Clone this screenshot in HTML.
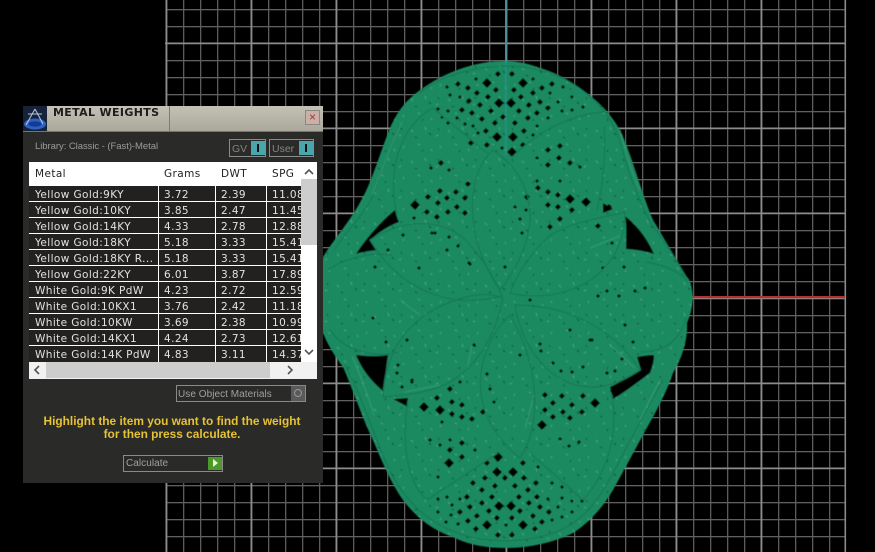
<!DOCTYPE html>
<html><head><meta charset="utf-8">
<style>
html,body{margin:0;padding:0;background:#000;width:875px;height:552px;overflow:hidden}
#stage{position:relative;width:875px;height:552px;overflow:hidden;background:#000}
svg.bg{position:absolute;left:0;top:0}
.p{position:absolute;left:23px;top:106px;width:300px;height:377px;background:#2a2a29}
.a{position:absolute;white-space:nowrap}
.title{left:0;top:0;width:300px;height:25px;background:linear-gradient(#c4c2b6,#aaa89b);border-bottom:1px solid #77766d}
.tt{font:bold 11px "DejaVu Sans",sans-serif;color:#1d1d1d;left:30px;top:0;letter-spacing:.35px}
.lib{font:9.5px "Liberation Sans",sans-serif;color:#9c9c9c;left:12px;top:35px;letter-spacing:-.05px}
.tg{border:1px solid #8b8b8b;box-sizing:border-box;height:18px;color:#858585;font:10.5px "Liberation Sans",sans-serif;line-height:18px;padding-left:2px}
.tb{position:absolute;top:1px;right:0;width:14px;height:14px;background:#4aa6ad}
.tb:after{content:"";position:absolute;left:6px;top:3px;width:2px;height:8px;background:#111}
.tbl{left:6px;top:56px;width:288px;height:217px;background:#f1f1f1;overflow:hidden}
.hd{left:0;top:0;width:272px;height:24px;background:#fff}
.c{font:10.5px "DejaVu Sans",sans-serif;letter-spacing:.4px}
.hc{color:#222;line-height:24px;top:0}
.row{left:0;width:272px;height:15px;background:#222120;overflow:hidden;border-bottom:1px solid #fff;color:#e2e2e2;font:10.5px/18px "DejaVu Sans",sans-serif;letter-spacing:.4px}
.row span{position:absolute;top:0;white-space:nowrap}
.n{left:6px}.g{left:135px}.d{left:192px}.s{left:243px}
.v{top:0;width:1px;height:200px;background:#fff}
.hint{left:0;width:298px;text-align:center;color:#e6c234;font:bold 11.9px/13px "Liberation Sans",sans-serif;top:309px;white-space:nowrap}
.btn{border:1px solid #8a8a8a;box-sizing:border-box;color:#a0a0a0;font:10px "Liberation Sans",sans-serif}
</style></head><body><div id="stage">
<svg class="bg" width="875" height="552" viewBox="0 0 875 552" xmlns="http://www.w3.org/2000/svg">
<defs>
<pattern id="mn" x="166" y="9" width="17" height="17" patternUnits="userSpaceOnUse">
<rect x="0" y="0" width="1.3" height="17" fill="#5c5c5c"/><rect x="0" y="0" width="17" height="1.3" fill="#606060"/></pattern>
<pattern id="mj" x="165.5" y="42.5" width="85" height="85" patternUnits="userSpaceOnUse">
<rect x="0" y="0" width="1.8" height="85" fill="#8c8c8c"/><rect x="0" y="0" width="85" height="1.6" fill="#8c8c8c"/></pattern>
<pattern id="sp" width="37" height="31" patternUnits="userSpaceOnUse">
<path d="M4 6l2 2M18 3l1 3M29 12l2-1M11 20l2 1M24 25l1 2M33 24l1-2" stroke="#4fae8b" stroke-width=".8" fill="none"/>
<path d="M8 13l2 1M22 9l2 2M15 28l1-2M31 4l1 2" stroke="#0a5538" stroke-width="1" fill="none"/></pattern>
<filter id="soft" x="-5%" y="-5%" width="110%" height="110%"><feGaussianBlur stdDeviation=".45"/></filter>
<filter id="g" x="0" y="0" width="100%" height="100%"><feGaussianBlur stdDeviation=".35"/></filter>
</defs>
<g filter="url(#g)">
<rect x="166" y="0" width="680" height="552" fill="url(#mn)"/>
<rect x="165" y="0" width="681" height="552" fill="url(#mj)"/>
<rect x="844.5" y="0" width="1.6" height="552" fill="#8a8a8a"/>
<rect x="505" y="0" width="1.6" height="62" fill="#2b93a8"/>
<rect x="690" y="296" width="155" height="2.2" fill="#b13232"/>
</g>
<g filter="url(#soft)">
<path d="M505 61C475 61 445 72 420 90C405 101 397 112 390 128C381 150 373 178 363 197C350 222 333 240 323 257C319 275 320 310 323 333C330 350 338 360 343 367C353 390 363 420 373 440C382 462 392 485 403 500C418 520 435 531 453 537C470 546 490 548 507 548C530 548 555 542 573 533C590 522 603 507 613 490C627 465 640 440 653 417C662 400 668 388 673 373C682 358 688 340 687 323C692 312 694 298 692 290C691 282 689 279 687 277C678 262 665 240 653 220C642 195 632 155 620 130C610 113 600 103 587 93C570 80 555 72 537 67C527 63 515 61 505 61Z" fill="#1b8a60"/>
<path d="M505 61C475 61 445 72 420 90C405 101 397 112 390 128C381 150 373 178 363 197C350 222 333 240 323 257C319 275 320 310 323 333C330 350 338 360 343 367C353 390 363 420 373 440C382 462 392 485 403 500C418 520 435 531 453 537C470 546 490 548 507 548C530 548 555 542 573 533C590 522 603 507 613 490C627 465 640 440 653 417C662 400 668 388 673 373C682 358 688 340 687 323C692 312 694 298 692 290C691 282 689 279 687 277C678 262 665 240 653 220C642 195 632 155 620 130C610 113 600 103 587 93C570 80 555 72 537 67C527 63 515 61 505 61Z" fill="url(#sp)"/>
<rect x="505" y="60" width="1.6" height="95" fill="#2a9db0" opacity=".45"/>
<g fill="#030504">
<path d="M395 210C380 222 365 240 356 254C362 252 370 251 377 250L370 240C378 233 388 226 399 222C397 218 396 214 395 210Z"/>
<path d="M603 203L613 209L603 213Z"/>
<path d="M625 216C638 226 648 240 654 254C648 252 640 250 626 249C626 238 627 227 625 216Z"/>
<path d="M356 355C365 356 376 357 388 355L383 391C372 382 362 370 356 355Z"/>
<path d="M393 399L408 398L408 407Z"/>
<path d="M637 357C642 356 648 355 654 355C654 362 652 368 650 373C638 382 625 392 613 399L610 387C620 382 632 376 641 370Z"/>
</g>
<g fill="none" stroke="#030504">
<path transform="translate(-2.5 -2.5)" stroke-width="7" d="M487 83l5 5M523 83l5 5M499 103l5 5M511 103l5 5M497 137l5 5M513 137l5 5M512 152l5 5M498 457l5 5M497 472l5 5M513 472l5 5M499 506l5 5M511 506l5 5M487 525l5 5M523 525l5 5M415 205l5 5M570 199l5 5M586 202l5 5M615 391l5 5M595 403l5 5M424 407l5 5M440 410l5 5M449 463l5 5M542 425l5 5"/>
<path transform="translate(-1.6 -1.6)" stroke-width="4.4" d="M498 74l3 3M512 74l3 3M458 84l3 3M552 84l3 3M468 88l3 3M496 90l3 3M514 90l3 3M542 88l3 3M477 93l3 3M533 93l3 3M488 97l3 3M521 97l3 3M469 101l3 3M540 102l3 3M480 105l3 3M529 105l3 3M462 110l3 3M548 108l3 3M472 113l3 3M491 111l3 3M519 111l3 3M537 113l3 3M482 119l3 3M503 117l3 3M528 118l3 3M495 123l3 3M515 123l3 3M486 131l3 3M524 131l3 3M471 143l3 3M487 145l3 3M523 145l3 3M487 463l3 3M523 463l3 3M473 483l3 3M485 478l3 3M505 478l3 3M524 478l3 3M536 483l3 3M495 486l3 3M515 486l3 3M482 490l3 3M528 490l3 3M467 497l3 3M492 497l3 3M519 497l3 3M537 497l3 3M482 503l3 3M529 503l3 3M470 507l3 3M540 507l3 3M460 512l3 3M489 511l3 3M520 511l3 3M549 512l3 3M477 516l3 3M533 516l3 3M468 521l3 3M497 518l3 3M512 518l3 3M542 522l3 3M476 529l3 3M535 529l3 3M498 535l3 3M512 535l3 3M468 184l3 3M456 192l3 3M440 191l3 3M428 197l3 3M447 198l3 3M465 198l3 3M438 203l3 3M457 207l3 3M427 212l3 3M448 212l3 3M465 213l3 3M437 217l3 3M538 188l3 3M527 197l3 3M548 192l3 3M558 195l3 3M548 205l3 3M558 207l3 3M572 210l3 3M609 207l3 3M560 219l3 3M550 227l3 3M598 226l3 3M452 402l3 3M437 398l3 3M450 389l3 3M462 405l3 3M452 414l3 3M462 417l3 3M472 419l3 3M483 412l3 3M583 396l3 3M572 405l3 3M562 396l3 3M553 403l3 3M545 395l3 3M545 410l3 3M553 417l3 3M563 412l3 3M582 412l3 3M570 418l3 3M462 443l3 3M450 450l3 3M462 457l3 3M560 146l3 3M548 150l3 3M559 158l3 3M548 165l3 3M570 163l3 3M441 163l3 3"/>
<path transform="translate(-1 -1)" stroke-width="2.8" d="M476 79l2 2M533 79l2 2M447 87l2 2M563 87l2 2M550 93l2 2M460 97l2 2M572 97l2 2M450 95l2 2M558 102l2 2M438 109l2 2M448 111l2 2M562 111l2 2M572 110l2 2M583 107l2 2M442 117l2 2M457 118l2 2M548 118l2 2M448 123l2 2M465 124l2 2M473 126l2 2M537 126l2 2M478 133l2 2M533 135l2 2M502 148l2 2M538 467l2 2M552 483l2 2M562 487l2 2M548 499l2 2M562 498l2 2M582 501l2 2M572 501l2 2M438 499l2 2M447 497l2 2M460 499l2 2M452 505l2 2M558 507l2 2M438 512l2 2M572 512l2 2M451 515l2 2M562 517l2 2M446 522l2 2M552 520l2 2M458 524l2 2M506 525l2 2M414 218l2 2M515 207l2 2M520 219l2 2M522 233l2 2M526 210l2 2M612 243l2 2M419 268l2 2M458 246l2 2M469 263l2 2M449 237l2 2M432 233l2 2M403 235l2 2M447 250l2 2M603 268l2 2M607 291l2 2M598 296l2 2M590 340l2 2M540 344l2 2M553 363l2 2M561 371l2 2M572 372l2 2M583 367l2 2M607 373l2 2M615 371l2 2M407 340l2 2M487 374l2 2M490 389l2 2M494 402l2 2M460 382l2 2M405 403l2 2M412 382l2 2M442 422l2 2M430 440l2 2M440 445l2 2M450 440l2 2M438 477l2 2M475 450l2 2M560 439l2 2M569 446l2 2M579 442l2 2M431 168l2 2M449 170l2 2M537 158l2 2M537 181l2 2M560 181l2 2M580 167l2 2M624 267l2 2M619 296l2 2M635 291l2 2M645 288l2 2M375 267l2 2M388 250l2 2M470 264l2 2M435 233l2 2M373 318l2 2M386 342l2 2M398 365l2 2M412 380l2 2M402 387l2 2M397 373l2 2M592 340l2 2M633 342l2 2M622 359l2 2M625 325l2 2M505 267l2 2M474 345l2 2M541 351l2 2M520 355l2 2M530 300l2 2M570 330l2 2"/>
</g>
<g fill="none" stroke="#15795a" stroke-width="1.2">
<path d="M420 93C445 72 480 67 505 66C540 66 570 78 592 98C606 112 615 125 621 145C628 172 640 205 652 224C665 245 680 262 685 278"/>
<path d="M399 125C390 150 382 172 372 197C362 218 345 232 334 250"/>
<path d="M433 108L487 153"/><path d="M433 108C405 122 385 165 397 215"/>
<path d="M512 157C540 130 570 115 603 112"/><path d="M604 126C606 155 603 185 597 210"/>
<path d="M493 150C465 175 464 240 500 290C532 250 550 190 493 150Z"/>
<path d="M370 240C410 215 450 220 470 245C490 268 497 285 502 296C450 310 400 290 370 240Z"/>
<path d="M625 212C590 220 560 225 545 240C525 260 515 280 510 293C560 305 625 280 625 212Z"/>
<path d="M383 397C385 350 410 310 470 296C488 293 495 295 503 298C495 340 470 380 430 390C415 394 398 396 383 397Z"/>
<path d="M640 370C615 330 570 305 515 305C520 340 545 385 590 387C610 388 628 378 640 370Z"/>
<path d="M520 458C542 425 540 365 510 315C478 345 460 410 520 458Z"/>
<path d="M498 453L427 500M530 453L583 500"/>
<path d="M408 400C402 440 405 480 427 500"/><path d="M612 395C618 430 610 470 583 500"/>
<path d="M328 270C345 258 370 252 392 255"/><path d="M645 262C665 265 680 272 688 282"/>
<path d="M330 330C345 352 375 358 400 352"/><path d="M640 352C665 352 680 340 686 318"/>
<path d="M345 365C360 392 372 430 385 460C395 485 415 515 450 530C480 544 530 545 565 528C590 515 605 490 620 460C635 430 650 405 663 380"/>
</g>
<g fill="none" stroke="#4aa585" stroke-width="1" opacity=".6">
<path d="M372 195C385 165 392 140 402 122M620 130C625 150 632 175 640 190M352 356C360 375 368 395 374 415M660 380C652 395 645 410 640 420M405 392L440 385M590 248L620 236M610 345L635 368M400 300L420 315M472 345L468 365M534 395L525 428"/>
</g>
</g>
</svg>
<div class="p">
<div class="a title"></div>
<svg class="a" style="left:0;top:0" width="24" height="25" viewBox="0 0 24 25">
<rect width="24" height="25" fill="#15223a"/>
<ellipse cx="12" cy="18" rx="11" ry="5.5" fill="#2b62c4"/><ellipse cx="12" cy="18" rx="6.5" ry="2.6" fill="#123a96"/>
<path d="M12 3L3 19M12 3L20 18M5 8h14" stroke="#b9c7e0" stroke-width="1" fill="none"/></svg>
<div class="a" style="left:146px;top:0;width:1px;height:25px;background:#7f7e76"></div>
<div class="a tt">METAL WEIGHTS</div>
<div class="a" style="left:282px;top:4px;width:13px;height:13px;background:#c9b1aa;border:1px solid #8c8880;color:#a23a32;font:12px/13px 'Liberation Sans',sans-serif;text-align:center">×</div>
<div class="a lib">Library: Classic - (Fast)-Metal</div>
<div class="a tg" style="left:206px;top:33px;width:37px">GV<div class="tb"></div></div>
<div class="a tg" style="left:246px;top:33px;width:45px">User<div class="tb"></div></div>
<div class="a tbl">
<div class="a hd"></div>
<div class="a c hc" style="left:6px;top:0;line-height:25px">Metal</div><div class="a c hc" style="left:135px;line-height:25px">Grams</div><div class="a c hc" style="left:192px;line-height:25px">DWT</div><div class="a c hc" style="left:243px;line-height:25px">SPG</div>
<div class="a row" style="top:24px"><span class="n">Yellow Gold:9KY</span><span class="g">3.72</span><span class="d">2.39</span><span class="s">11.08</span></div>
<div class="a row" style="top:40px"><span class="n">Yellow Gold:10KY</span><span class="g">3.85</span><span class="d">2.47</span><span class="s">11.45</span></div>
<div class="a row" style="top:56px"><span class="n">Yellow Gold:14KY</span><span class="g">4.33</span><span class="d">2.78</span><span class="s">12.88</span></div>
<div class="a row" style="top:72px"><span class="n">Yellow Gold:18KY</span><span class="g">5.18</span><span class="d">3.33</span><span class="s">15.41</span></div>
<div class="a row" style="top:88px"><span class="n">Yellow Gold:18KY R...</span><span class="g">5.18</span><span class="d">3.33</span><span class="s">15.41</span></div>
<div class="a row" style="top:104px"><span class="n">Yellow Gold:22KY</span><span class="g">6.01</span><span class="d">3.87</span><span class="s">17.89</span></div>
<div class="a row" style="top:120px"><span class="n">White Gold:9K PdW</span><span class="g">4.23</span><span class="d">2.72</span><span class="s">12.59</span></div>
<div class="a row" style="top:136px"><span class="n">White Gold:10KX1</span><span class="g">3.76</span><span class="d">2.42</span><span class="s">11.18</span></div>
<div class="a row" style="top:152px"><span class="n">White Gold:10KW</span><span class="g">3.69</span><span class="d">2.38</span><span class="s">10.99</span></div>
<div class="a row" style="top:168px"><span class="n">White Gold:14KX1</span><span class="g">4.24</span><span class="d">2.73</span><span class="s">12.61</span></div>
<div class="a row" style="top:184px;height:16px;border:0"><span class="n">White Gold:14K PdW</span><span class="g">4.83</span><span class="d">3.11</span><span class="s">14.37</span></div>
<div class="a v" style="left:129px"></div><div class="a v" style="left:186px"></div><div class="a v" style="left:237px"></div>
<div class="a" style="left:272px;top:0;width:16px;height:200px;background:#fff"></div>
<div class="a" style="left:272px;top:17px;width:16px;height:66px;background:#cdcdcd"></div>
<div class="a" style="left:0;top:200px;width:288px;height:16px;background:#f1f1f1"></div>
<div class="a" style="left:17px;top:200px;width:224px;height:16px;background:#cdcdcd"></div>
<svg class="a" style="left:0;top:0" width="288" height="217" viewBox="0 0 288 217"><g fill="none" stroke="#555" stroke-width="1.6"><path d="M276 12l4-4 4 4M276 188l4 4 4-4M10 204l-4 4 4 4M259 204l4 4-4 4"/></g></svg>
</div>
<div class="a btn" style="left:153px;top:279px;width:130px;height:17px;line-height:18px;padding-left:1px;letter-spacing:.05px">Use Object Materials<div style="position:absolute;right:0;top:0;width:14px;height:15px;background:#5a5a5a"><div style="position:absolute;left:3px;top:3px;width:6px;height:6px;border:1px solid #999;border-radius:50%"></div></div></div>
<div class="a hint">Highlight the item you want to find the weight<br>for then press calculate.</div>
<div class="a btn" style="left:100px;top:349px;width:100px;height:17px;line-height:16px;padding-left:2px;letter-spacing:.05px">Calculate<div style="position:absolute;right:0;top:1px;width:14px;height:13px;background:#4d9a2a"><div style="position:absolute;left:5px;top:2px;border-left:5px solid #e8f5d8;border-top:4px solid transparent;border-bottom:4px solid transparent"></div></div></div>
</div>
</div></body></html>
